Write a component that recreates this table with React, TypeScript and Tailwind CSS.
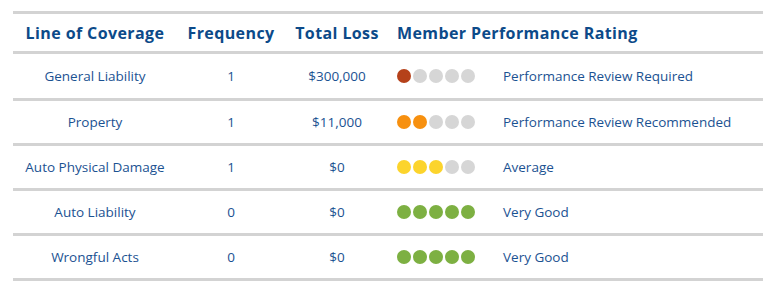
const rows = [
  { line: "General Liability", freq: "1", loss: "$300,000", filled: 1, color: "bg-[#b5411a]", rating: "Performance Review Required" },
  { line: "Property", freq: "1", loss: "$11,000", filled: 2, color: "bg-[#f7900f]", rating: "Performance Review Recommended" },
  { line: "Auto Physical Damage", freq: "1", loss: "$0", filled: 3, color: "bg-[#fcd42c]", rating: "Average" },
  { line: "Auto Liability", freq: "0", loss: "$0", filled: 5, color: "bg-[#7db042]", rating: "Very Good" },
  { line: "Wrongful Acts", freq: "0", loss: "$0", filled: 5, color: "bg-[#7db042]", rating: "Very Good" },
];

function Dots({ filled, color }: { filled: number; color: string }) {
  return (
    <div className="flex gap-[2px] w-[106px]">
      {[0, 1, 2, 3, 4].map((i) => (
        <span
          key={i}
          className={`w-[14px] h-[14px] rounded-full ${i < filled ? color : "bg-[#d6d6d6]"}`}
        />
      ))}
    </div>
  );
}

export default function App() {
  return (
    <div className="w-[770px] h-[289px] bg-white font-['Open_Sans',sans-serif]">
      <div className="ml-[13px] mt-[11px] w-[750px] border-t-[3px] border-[#d3d3d3]">
        {/* header */}
        <div className="grid grid-cols-[164px_108px_104px_1fr] h-[40px] items-center border-b-[3px] border-[#d3d3d3] text-[16px] font-bold text-[#0c4a89] tracking-[0.4px]">
          <div className="text-center">Line of Coverage</div>
          <div className="text-center">Frequency</div>
          <div className="text-center">Total Loss</div>
          <div className="pl-[8px]">Member Performance Rating</div>
        </div>
        {rows.map((r, i) => (
          <div
            key={r.line}
            className={`grid grid-cols-[164px_108px_104px_1fr] ${i === 0 ? "h-[47px]" : "h-[45px]"} items-center border-b-[3px] border-[#d3d3d3] text-[13.5px] text-[#1b5292]`}
          >
            <div className="text-center">{r.line}</div>
            <div className="text-center">{r.freq}</div>
            <div className="text-center">{r.loss}</div>
            <div className="pl-[8px] flex items-center">
              <Dots filled={r.filled} color={r.color} />
              <span>{r.rating}</span>
            </div>
          </div>
        ))}
      </div>
    </div>
  );
}
